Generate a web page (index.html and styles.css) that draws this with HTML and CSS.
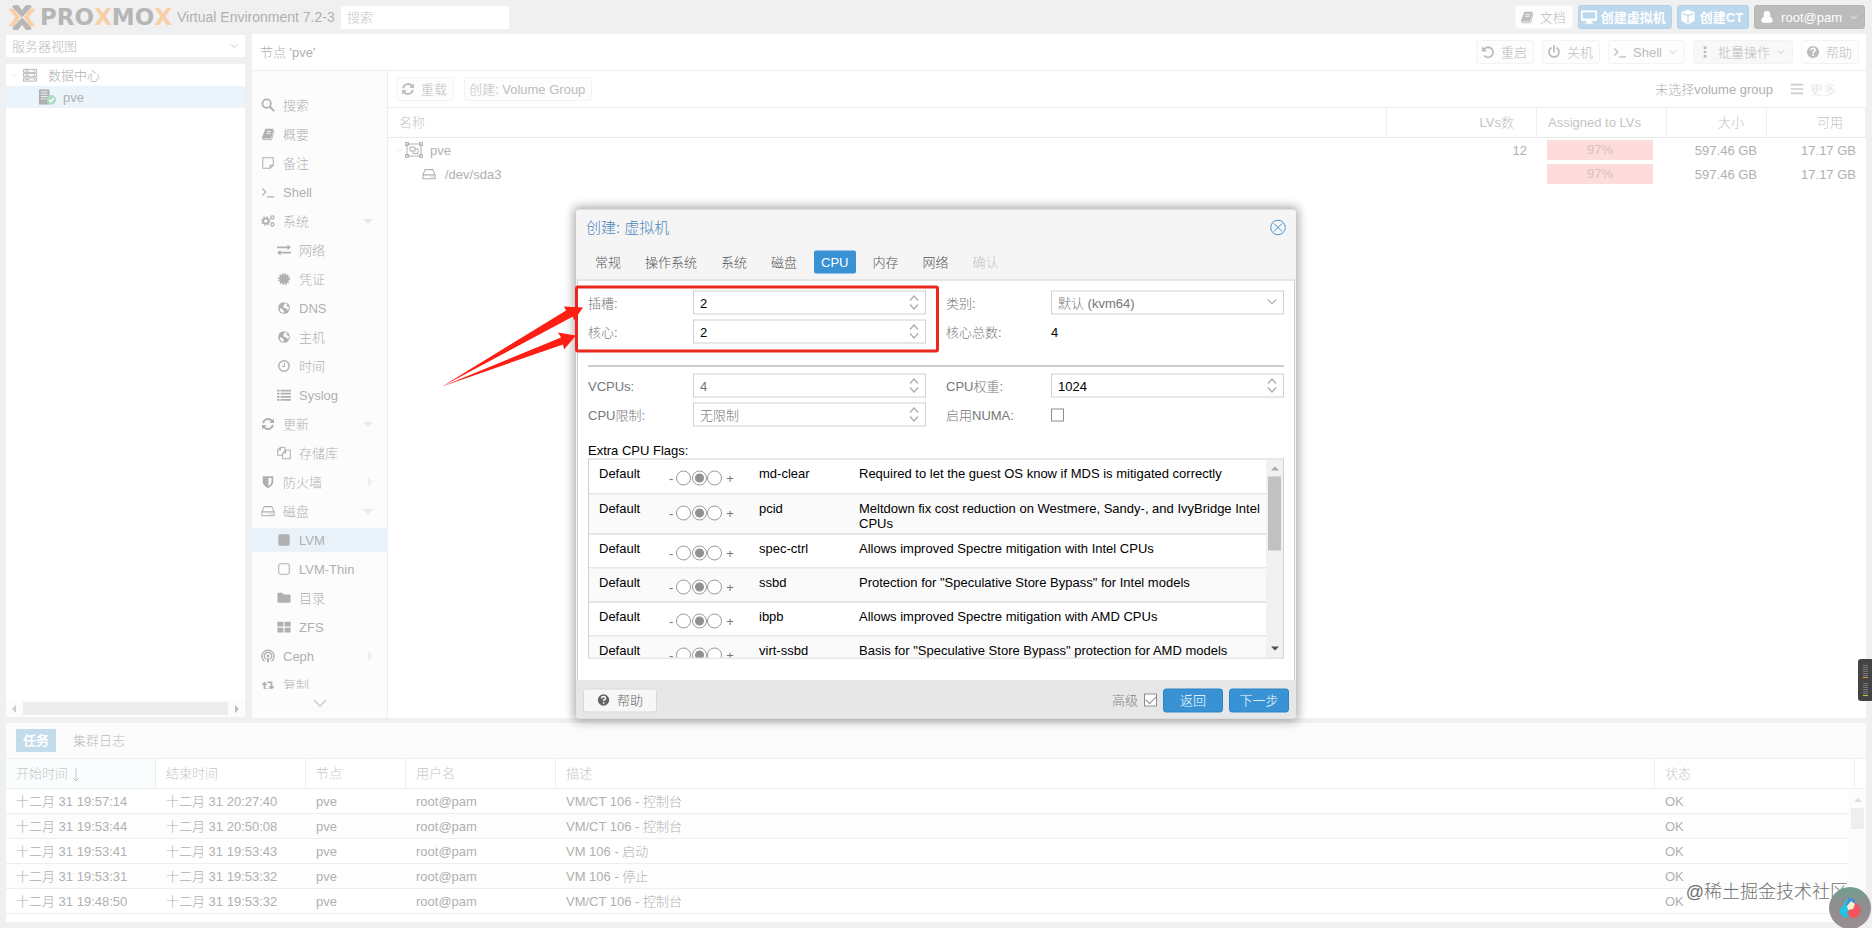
FILE: index.html
```html
<!DOCTYPE html>
<html lang="zh-CN">
<head>
<meta charset="utf-8">
<title>pve - Proxmox Virtual Environment</title>
<link rel="stylesheet" href="styles.css">
</head>
<body>
<svg class="defs" aria-hidden="true">
  <symbol id="search" viewBox="0 0 16 16"><circle cx="6.5" cy="6.5" r="4.8" fill="none" stroke="currentColor" stroke-width="2"/><path d="M10 10l5 5" stroke="currentColor" stroke-width="2.4"/></symbol>
  <symbol id="book" viewBox="0 0 16 16"><path d="M5 2h9.5l-3 11H2.500Q.8 13 1.500 11z"/><path d="M15 4l-3 10.500H3M1.500 12.500q.2 2 2 2" fill="none" stroke="currentColor"/><path d="M6.500 5h5M6 7.200h5" stroke="#fff"/></symbol>
  <symbol id="note" viewBox="0 0 16 16"><path d="M2 2h12v8.500L10.500 14H2zM10.500 14v-3.500H14" fill="none" stroke="currentColor" stroke-width="1.200"/></symbol>
  <symbol id="term" viewBox="0 0 16 16"><path d="M1.500 4l4 4-4 4M7 13.500h8" fill="none" stroke="currentColor" stroke-width="1.300"/></symbol>
  <symbol id="cogs" viewBox="0 0 16 16"><circle cx="5.500" cy="8" r="3" fill="none" stroke="currentColor" stroke-width="2"/><circle cx="5.500" cy="8" r="4.600" fill="none" stroke="currentColor" stroke-width="1.600" stroke-dasharray="1.800 1.810"/><circle cx="13" cy="4" r="1.800" fill="none" stroke="currentColor" stroke-width="1.400"/><circle cx="13" cy="12" r="1.800" fill="none" stroke="currentColor" stroke-width="1.400"/></symbol>
  <symbol id="swap" viewBox="0 0 16 16"><path d="M0 4h12V1.800L16 5l-4 3V6H0zM16 10H4V8L0 11l4 3.200V12h12z"/></symbol>
  <symbol id="cert" viewBox="0 0 16 16"><circle cx="8" cy="8" r="5.500"/><circle cx="8" cy="8" r="6" fill="none" stroke="currentColor" stroke-width="2" stroke-dasharray="1.570 1.570"/></symbol>
  <symbol id="globe" viewBox="0 0 16 16"><circle cx="8" cy="8" r="6.700"/><path d="M9 2.500l3 1-1.500 2L13.800 7l-1 4-2-2.500-2.500-.5L7 6zM3 8l3.500 1.500L8 12l-1 1.800L4 12z" fill="#fcfcfc"/></symbol>
  <symbol id="clock" viewBox="0 0 16 16"><circle cx="8" cy="8" r="6" fill="none" stroke="currentColor" stroke-width="1.700"/><path d="M8.500 4.500v4H5.500" fill="none" stroke="currentColor" stroke-width="1.200"/></symbol>
  <symbol id="list" viewBox="0 0 16 16"><path d="M0 2h3v2H0zM4 2h12v2H4zM0 5.500h3v2H0zM4 5.500h12v2H4zM0 9h3v2H0zM4 9h12v2H4zM0 12.500h3v2H0zM4 12.500h12v2H4z"/></symbol>
  <symbol id="refresh" viewBox="0 0 16 16"><path d="M2.500 7A5.600 5.600 0 0 1 12.500 4.500M13.500 9A5.600 5.600 0 0 1 3.500 11.500" fill="none" stroke="currentColor" stroke-width="2.200"/><path d="M14.800 1.500v5.300H9.500zM1.200 14.500V9.200h5.300z"/></symbol>
  <symbol id="copy" viewBox="0 0 16 16"><path d="M6 10.500H.800v-6L4 1.500h5v3M4 1.500v3H.800M6.500 8L10 4.500h5.200v10H6.500zM10 4.500V8H6.500" fill="none" stroke="currentColor" stroke-width="1.200"/></symbol>
  <symbol id="shield" viewBox="0 0 16 16"><path d="M2 1.500h12V8q0 4-6 7-6-3-6-7z"/><path d="M8.500 3.300H12V8q0 2.500-3.500 4.800z" fill="#fcfcfc"/></symbol>
  <symbol id="disk" viewBox="0 0 16 16"><path d="M1 9l2.500-6h9L15 9v4.500H1zM1 9h14M9.500 11.300h1M12 11.300h1" fill="none" stroke="currentColor" stroke-width="1.200" stroke-linejoin="round"/></symbol>
  <symbol id="sq" viewBox="0 0 16 16"><rect x="1.500" y="1.500" width="13" height="13" rx="2"/></symbol>
  <symbol id="sqo" viewBox="0 0 16 16"><rect x="2" y="2" width="12" height="12" rx="2" fill="none" stroke="currentColor" stroke-width="1.200"/></symbol>
  <symbol id="folder" viewBox="0 0 16 16"><path d="M.500 3.500q0-1.500 1.500-1.500h4l1.500 2H14q1.500 0 1.500 1.500V12q0 1.500-1.500 1.500H2Q.500 13.500.500 12z"/></symbol>
  <symbol id="grid" viewBox="0 0 16 16"><path d="M.500 2h6.800v5.500H.500zM8.700 2h6.800v5.500H8.700zM.500 8.800h6.800v5.500H.500zM8.700 8.800h6.800v5.500H8.700z"/></symbol>
  <symbol id="ceph" viewBox="0 0 16 16"><path d="M4 14A7 7 0 1 1 12 14M5.500 11.500a4.300 4.300 0 1 1 5 0" fill="none" stroke="currentColor" stroke-width="1.500"/><circle cx="8" cy="8" r="1.700"/><path d="M6.500 10.500h3L9 15H7z"/></symbol>
  <symbol id="retweet" viewBox="0 0 16 16"><path d="M4 4L.500 8H3v6h8l-1.500-2H5V8h2.500zM6.500 4H13v5.500h2.500L12 13.500 8.500 9.500H11V6H8z"/></symbol>
  <symbol id="desktop" viewBox="0 0 16 16"><path d="M1 1.500h14q1 0 1 1V11q0 1-1 1h-4.500v1.500h1.500v1.300H4v-1.300h1.500V12H1q-1 0-1-1V2.500q0-1 1-1zm.700 1.700v6.300h12.600V3.200z" fill-rule="evenodd"/></symbol>
  <symbol id="cube" viewBox="0 0 16 16"><path d="M8 .800l6.700 2.500v8.400L8 15.200l-6.700-3.500V3.300z"/><path d="M2.500 4.500L8 6.500l5.500-2M8 6.500V14" fill="none" stroke="#bbd8ec" stroke-width="1.200"/></symbol>
  <symbol id="user" viewBox="0 0 16 16"><circle cx="8" cy="5" r="3.800"/><path d="M1.500 12.500Q2 8 5 7.500q3 2 6 0 3 .5 3.500 5 0 2-2 2h-9q-2 0-2-2z"/></symbol>
  <symbol id="undo" viewBox="0 0 16 16"><path d="M3 5.500A5.800 5.800 0 1 1 3.500 12" fill="none" stroke="currentColor" stroke-width="2.100"/><path d="M1 1.500v6h6z"/></symbol>
  <symbol id="power" viewBox="0 0 16 16"><path d="M4.500 3.500a5.700 5.700 0 1 0 7 0M8 1v6.500" fill="none" stroke="currentColor" stroke-width="2" stroke-linecap="round"/></symbol>
  <symbol id="dots" viewBox="0 0 16 16"><path d="M6.500 1.500h3v3h-3zM6.500 6.500h3v3h-3zM6.500 11.500h3v3h-3z"/></symbol>
  <symbol id="help" viewBox="0 0 16 16"><circle cx="8" cy="8" r="7"/><path d="M5.600 6q.2-2.200 2.500-2.200t2.400 2q0 1.200-1.300 1.800-1 .6-1 1.700M8.200 10.700v2" fill="none" stroke="#fff" stroke-width="1.800"/></symbol>
  <symbol id="bars" viewBox="0 0 16 16"><path d="M1 3h14M1 8h14M1 13h14" stroke="currentColor" stroke-width="1.800"/></symbol>
  <symbol id="chev" viewBox="0 0 16 16"><path d="M3 5.500l5 5 5-5" fill="none" stroke="currentColor" stroke-width="1.300"/></symbol>
  <symbol id="servers" viewBox="0 0 16 16"><path d="M.500 1.500h15V5H.500zM.500 6.500h15V10H.500zM.500 11.500h15V15H.500zM2 3.300h5M2 8.300h5M2 13.300h5M12 3.300h2M12 8.300h2M12 13.300h2" fill="none" stroke="currentColor"/></symbol>
  <symbol id="node" viewBox="0 0 20 16"><path d="M1 0h11v16H1z"/><path d="M3 2.500h7M3 5h7M3 7.500h7M3 10h5" stroke="#eaf2f8"/><circle cx="14" cy="11" r="5" fill="#a9dcc0"/><path d="M11.500 11l2 2 3.200-4" fill="none" stroke="#fff" stroke-width="1.500"/></symbol>
  <symbol id="group" viewBox="0 0 18 16"><path d="M2 2h14v12H2zM5 5h5v4H5zM8 9v2.500h5V7h-3M.500.500h3v3h-3zM14.500.500h3v3h-3zM.500 12.500h3v3h-3zM14.500 12.500h3v3h-3z" fill="none" stroke="currentColor"/></symbol>
  <symbol id="spin" viewBox="0 0 10 16"><path d="M1 6l4-4.500L9 6M1 10l4 4.500L9 10" fill="none" stroke="currentColor" stroke-width="1.200"/></symbol>
  <symbol id="sort" viewBox="0 0 8 14"><path d="M4 0v13M1 10l3 3 3-3" fill="none" stroke="currentColor"/></symbol>
</svg>

<header class="top">
  <a class="logo" href="#" aria-label="Proxmox">
    <svg class="logo-mark" viewBox="0 0 28 26"><path d="M0 4h5.500l5 6.500L12 13l-1.500 2.500-5 6.500H0l7-9zM28 4h-5.500l-5 6.500L16 13l1.500 2.500 5 6.500H28l-7-9z" fill="#f8cfa8"/><path d="M4 2Q4 0 7 0h3l4 5.500L18 0h3q3 0 3 2l-10 11zM4 24q0 2 3 2h3l4-5.500L18 26h3q3 0 3-2L14 13z" fill="#b6b6b6"/></svg>
    <span class="word">PRO<b>X</b>MO<b>X</b></span>
  </a>
  <span class="version">Virtual Environment 7.2-3</span>
  <input class="search" type="text" placeholder="搜索" aria-label="搜索">
  <nav class="top-actions">
    <button class="btn plain"><svg><use href="#book"/></svg>文档</button>
    <button class="btn blue"><svg><use href="#desktop"/></svg>创建虚拟机</button>
    <button class="btn blue"><svg><use href="#cube"/></svg>创建CT</button>
    <button class="btn grey"><svg><use href="#user"/></svg>root@pam<svg class="small"><use href="#chev"/></svg></button>
  </nav>
</header>

<main class="work">
  <aside class="resources">
    <button class="view-select">服务器视图<svg class="small"><use href="#chev"/></svg></button>
    <div class="tree">
      <div class="tree-row"><svg class="tick"><use href="#chev"/></svg><svg><use href="#servers"/></svg><span>数据中心</span></div>
      <div class="tree-row child active"><svg class="wide"><use href="#node"/></svg><span>pve</span></div>
      <div class="hscroll"><i class="left"></i><i class="thumb"></i><i class="right"></i></div>
    </div>
  </aside>

  <section class="node">
    <div class="node-bar">
      <h1>节点 'pve'</h1>
      <button class="btn"><svg><use href="#undo"/></svg>重启</button>
      <button class="btn"><svg><use href="#power"/></svg>关机</button>
      <button class="btn"><svg><use href="#term"/></svg>Shell<svg class="small"><use href="#chev"/></svg></button>
      <button class="btn shaded"><svg><use href="#dots"/></svg>批量操作<svg class="small"><use href="#chev"/></svg></button>
      <button class="btn"><svg><use href="#help"/></svg>帮助</button>
    </div>
    <div class="node-body">
      <nav class="menu">
        <ul>
          <li><svg><use href="#search"/></svg>搜索</li>
          <li><svg><use href="#book"/></svg>概要</li>
          <li><svg><use href="#note"/></svg>备注</li>
          <li><svg><use href="#term"/></svg>Shell</li>
          <li class="open"><svg><use href="#cogs"/></svg>系统</li>
          <li class="sub"><svg><use href="#swap"/></svg>网络</li>
          <li class="sub"><svg><use href="#cert"/></svg>凭证</li>
          <li class="sub"><svg><use href="#globe"/></svg>DNS</li>
          <li class="sub"><svg><use href="#globe"/></svg>主机</li>
          <li class="sub"><svg><use href="#clock"/></svg>时间</li>
          <li class="sub"><svg><use href="#list"/></svg>Syslog</li>
          <li class="open"><svg><use href="#refresh"/></svg>更新</li>
          <li class="sub"><svg><use href="#copy"/></svg>存储库</li>
          <li class="closed"><svg><use href="#shield"/></svg>防火墙</li>
          <li class="open"><svg><use href="#disk"/></svg>磁盘</li>
          <li class="sub active"><svg><use href="#sq"/></svg>LVM</li>
          <li class="sub"><svg><use href="#sqo"/></svg>LVM-Thin</li>
          <li class="sub"><svg><use href="#folder"/></svg>目录</li>
          <li class="sub"><svg><use href="#grid"/></svg>ZFS</li>
          <li class="closed"><svg><use href="#ceph"/></svg>Ceph</li>
          <li><svg><use href="#retweet"/></svg>复制</li>
        </ul>
        <button class="more" aria-label="向下滚动"><svg><use href="#chev"/></svg></button>
      </nav>
      <div class="volumes">
        <div class="toolbar">
          <button class="btn"><svg><use href="#refresh"/></svg>重载</button>
          <button class="btn">创建: Volume Group</button>
          <span class="hint">未选择volume group</span>
          <button class="btn ghost"><svg><use href="#bars"/></svg><span>更多</span></button>
        </div>
        <table class="vg">
          <colgroup><col><col class="c150"><col class="c130"><col class="c100"><col class="c99"></colgroup>
          <thead><tr><th>名称</th><th class="num">LVs数</th><th>Assigned to LVs</th><th class="num">大小</th><th class="num">可用</th></tr></thead>
          <tbody>
            <tr><td><span class="cell"><svg class="tick"><use href="#chev"/></svg><svg class="wide"><use href="#group"/></svg>pve</span></td><td class="num">12</td><td><div class="usage">97%</div></td><td class="num">597.46 GB</td><td class="num">17.17 GB</td></tr>
            <tr><td><span class="cell leaf"><svg><use href="#disk"/></svg>/dev/sda3</span></td><td></td><td><div class="usage">97%</div></td><td class="num">597.46 GB</td><td class="num">17.17 GB</td></tr>
          </tbody>
        </table>
      </div>
    </div>
  </section>
</main>

<section class="log">
  <div class="log-tabs"><button class="log-tab active">任务</button><button class="log-tab">集群日志</button></div>
  <div class="log-body">
    <table class="tasks">
      <colgroup><col class="c150"><col class="c150"><col class="c100"><col class="c150"><col><col class="c200"><col class="c12"></colgroup>
      <thead><tr><th class="sorted">开始时间 <svg><use href="#sort"/></svg></th><th>结束时间</th><th>节点</th><th>用户名</th><th>描述</th><th>状态</th><th></th></tr></thead>
      <tbody>
        <tr><td>十二月 31 19:57:14</td><td>十二月 31 20:27:40</td><td>pve</td><td>root@pam</td><td>VM/CT 106 - 控制台</td><td>OK</td><td></td></tr>
        <tr><td>十二月 31 19:53:44</td><td>十二月 31 20:50:08</td><td>pve</td><td>root@pam</td><td>VM/CT 106 - 控制台</td><td>OK</td><td></td></tr>
        <tr><td>十二月 31 19:53:41</td><td>十二月 31 19:53:43</td><td>pve</td><td>root@pam</td><td>VM 106 - 启动</td><td>OK</td><td></td></tr>
        <tr><td>十二月 31 19:53:31</td><td>十二月 31 19:53:32</td><td>pve</td><td>root@pam</td><td>VM 106 - 停止</td><td>OK</td><td></td></tr>
        <tr><td>十二月 31 19:48:50</td><td>十二月 31 19:53:32</td><td>pve</td><td>root@pam</td><td>VM/CT 106 - 控制台</td><td>OK</td><td></td></tr>
      </tbody>
    </table>
    <div class="log-scroll"><i class="up"></i><i class="thumb"></i></div>
  </div>
</section>

<div class="dialog" role="dialog" aria-labelledby="dlg-title">
  <div class="dlg-head">
    <h2 id="dlg-title">创建: 虚拟机</h2>
    <button class="close" aria-label="关闭"><svg viewBox="0 0 16 16"><circle cx="8" cy="8" r="7.300"/><path d="M4 4l8 8M12 4l-8 8"/></svg></button>
  </div>
  <div class="tabs">
    <button>常规</button><button>操作系统</button><button>系统</button><button>磁盘</button><button class="active">CPU</button><button>内存</button><button>网络</button><button disabled>确认</button>
  </div>
  <div class="dlg-body">
    <div class="fields">
      <label for="sockets">插槽:</label>
      <div class="field"><input id="sockets" type="text" value="2"><svg><use href="#spin"/></svg></div>
      <label for="type">类别:</label>
      <div class="field"><select id="type"><option>默认 (kvm64)</option></select><svg class="drop"><use href="#chev"/></svg></div>
      <label for="cores">核心:</label>
      <div class="field"><input id="cores" type="text" value="2"><svg><use href="#spin"/></svg></div>
      <span class="label">核心总数:</span>
      <output for="sockets cores">4</output>
    </div>
    <hr>
    <div class="fields">
      <label for="vcpus">VCPUs:</label>
      <div class="field"><input id="vcpus" type="text" placeholder="4"><svg><use href="#spin"/></svg></div>
      <label for="weight">CPU权重:</label>
      <div class="field"><input id="weight" type="text" value="1024"><svg><use href="#spin"/></svg></div>
      <label for="limit">CPU限制:</label>
      <div class="field"><input id="limit" type="text" placeholder="无限制"><svg><use href="#spin"/></svg></div>
      <label for="numa">启用NUMA:</label>
      <input id="numa" class="check" type="checkbox">
    </div>
    <div class="flags-title">Extra CPU Flags:</div>
    <div class="flags">
      <table>
        <colgroup><col class="f70"><col class="f90"><col class="f100"><col></colgroup>
        <tbody>
          <tr><td>Default</td><td><div class="tri">-<input type="radio" name="f1" aria-label="关"><input type="radio" name="f1" aria-label="默认" checked><input type="radio" name="f1" aria-label="开">+</div></td><td>md-clear</td><td>Required to let the guest OS know if MDS is mitigated correctly</td></tr>
          <tr><td>Default</td><td><div class="tri">-<input type="radio" name="f2" aria-label="关"><input type="radio" name="f2" aria-label="默认" checked><input type="radio" name="f2" aria-label="开">+</div></td><td>pcid</td><td>Meltdown fix cost reduction on Westmere, Sandy-, and IvyBridge Intel CPUs</td></tr>
          <tr><td>Default</td><td><div class="tri">-<input type="radio" name="f3" aria-label="关"><input type="radio" name="f3" aria-label="默认" checked><input type="radio" name="f3" aria-label="开">+</div></td><td>spec-ctrl</td><td>Allows improved Spectre mitigation with Intel CPUs</td></tr>
          <tr><td>Default</td><td><div class="tri">-<input type="radio" name="f4" aria-label="关"><input type="radio" name="f4" aria-label="默认" checked><input type="radio" name="f4" aria-label="开">+</div></td><td>ssbd</td><td>Protection for "Speculative Store Bypass" for Intel models</td></tr>
          <tr><td>Default</td><td><div class="tri">-<input type="radio" name="f5" aria-label="关"><input type="radio" name="f5" aria-label="默认" checked><input type="radio" name="f5" aria-label="开">+</div></td><td>ibpb</td><td>Allows improved Spectre mitigation with AMD CPUs</td></tr>
          <tr><td>Default</td><td><div class="tri">-<input type="radio" name="f6" aria-label="关"><input type="radio" name="f6" aria-label="默认" checked><input type="radio" name="f6" aria-label="开">+</div></td><td>virt-ssbd</td><td>Basis for "Speculative Store Bypass" protection for AMD models</td></tr>
        </tbody>
      </table>
      <div class="vscroll"><i class="up"></i><i class="thumb"></i><i class="down"></i></div>
    </div>
  </div>
  <div class="dlg-foot">
    <button class="help"><svg><use href="#help"/></svg>帮助</button>
    <label for="adv">高级</label><input id="adv" class="check" type="checkbox" checked>
    <button class="primary">返回</button>
    <button class="primary">下一步</button>
  </div>
  <div class="mark"></div>
  <svg class="arrows" viewBox="0 0 160 115"><path d="M7 106L131 30l-2-4 19 1-9 13-1-4zM7 106L126 57l-3-5 18 3-12 14-1-5z" fill="#fd1f14"/></svg>
</div>

<div class="meter" aria-hidden="true"><i></i><i></i></div>
<div class="watermark">@稀土掘金技术社区</div>
<svg class="float" viewBox="0 0 42 42" aria-hidden="true"><defs><linearGradient id="ring" x2="0" y2="1"><stop stop-color="#6f9f90"/><stop offset=".4" stop-color="#8e8e8e"/><stop offset="1" stop-color="#9a8e94"/></linearGradient></defs><circle cx="21" cy="21" r="21" fill="url(#ring)"/><path d="M20 11q-4 2-5 7-5 3-4 8 2 5 8 4l2-9z" fill="#21c4e6"/><path d="M20 11q6 0 6 5l-5 5-4-3z" fill="#3a8fe0"/><path d="M21 21l5-5q7 3 5 10-2 6-8 5l-5-4z" fill="#f2555f"/><path d="M18 19l4-5 4 3-2 5-5 1z" fill="#f7efc9"/></svg>
</body>
</html>
```
FILE: styles.css
```css
* { box-sizing: border-box; }
body {
  margin: 0; height: 100vh; display: flex; flex-direction: column; overflow: hidden;
  padding-bottom: 6px; position: relative; background: #f0f0f0; color: #b0b0b0;
  font: 300 13px/17px "Liberation Sans", "Noto Sans CJK SC", sans-serif;
}
button, input, select { font: inherit; color: inherit; margin: 0; }
button { border: 0; background: none; padding: 0; white-space: nowrap; }
h1, h2 { margin: 0; font-weight: 300; }
svg { width: 14px; height: 14px; fill: currentColor; flex: none; }
.defs { position: absolute; width: 0; height: 0; }
table { border-collapse: separate; border-spacing: 0; table-layout: fixed; width: 100%; }
th { font-weight: 300; text-align: left; }

/* Header */
.top { flex: none; height: 34px; display: flex; align-items: center; padding: 0 7px 0 8px; }
.logo { display: flex; align-items: center; gap: 4px; text-decoration: none; width: 169px; }
.logo-mark { width: 28px; height: 25px; }
.word { font: bold 23px/26px "DejaVu Sans", sans-serif; color: #b6b6b6; }
.word b { color: #f8cfa8; }
.version { font-size: 14px; width: 164px; }
.search { width: 168px; height: 23px; border: 0; background: #fff; padding: 0 6px; outline: 0; }
.search::placeholder { color: #c8c8c8; }
.top-actions { margin-left: auto; display: flex; gap: 5px; }
.btn {
  height: 24px; display: flex; align-items: center; gap: 6px; padding: 0 6px 0 4px; color: #bcbcbc;
  border: 1px solid #f3f3f3; border-radius: 3px; background: #fdfdfd;
}
.btn.plain { border-color: #f8f8f8; }
.btn.blue { background: #bbd8ec; border-color: #b2d3e9; color: #fff; font-weight: bold; gap: 4px; padding: 0 5px 0 2px; }
.btn.blue svg { width: 16px; height: 16px; }
.btn.grey { background: #bcbcbc; border-color: #b6b6b6; color: #fff; font-weight: 400; gap: 7px; padding: 0 5px; }
.btn.shaded { background: #f8f8f8; }
.btn.ghost { border-color: transparent; background: none; width: 73px; margin-left: 2px; color: #ccc; }
.btn.ghost span { color: #e2e2e2; }
svg.small { width: 10px; height: 10px; }

/* Resource tree and node panel */
.work { flex: 1; min-height: 0; display: flex; gap: 7px; padding: 0 6px; }
.resources { width: 239px; display: flex; flex-direction: column; gap: 7px; padding: 1px 0; }
.view-select { height: 22px; display: flex; justify-content: space-between; align-items: center; padding: 0 6px; background: #fff; color: #bcbcbc; }
.tree { flex: 1; background: #fff; display: flex; flex-direction: column; }
.tree-row { height: 22px; display: flex; align-items: center; gap: 10px; padding-left: 4px; }
.tree-row svg { width: 16px; }
.tree-row.child { padding-left: 32px; gap: 6px; background: #eaf4fa; }
.tree-row svg.wide { width: 19px; height: 16px; }
.tree-row svg.tick, .cell svg.tick { width: 8px; height: 8px; color: #ddd; }
.tree-row svg.tick { margin-right: -6px; }
.hscroll { margin-top: auto; height: 17px; display: flex; align-items: center; gap: 7px; padding: 0 6px; background: #fcfcfc; }
.hscroll .thumb { flex: 1; height: 13px; background: #ececec; }
.left, .right { border: 4px solid transparent; }
.left { border-right-color: #ccc; border-left: 0; }
.right { border-left-color: #bbb; border-right: 0; }

.node { flex: 1; min-width: 0; background: #fff; display: flex; flex-direction: column; }
.node-bar { height: 37px; flex: none; display: flex; align-items: center; gap: 8px; padding: 0 7px 0 8px; border-bottom: 1px solid #eee; }
.node-bar h1 { font-size: 13px; margin-right: auto; }
.node-body { flex: 1; min-height: 0; display: flex; }
.menu { width: 136px; flex: none; padding: 20px 0 1px; background: #fcfcfc; border-right: 1px solid #eee; display: flex; flex-direction: column; }
.menu ul { list-style: none; margin: 0; padding: 0; flex: 1; overflow: hidden; }
.menu li { height: 24px; margin: 2px 0 5px; display: flex; align-items: center; gap: 8px; padding: 0 14px 0 9px; }
.menu li.sub { padding-left: 25px; }
.menu li.active { background: #e9f2f9; }
.open::after, .closed::after { content: ""; margin-left: auto; border: 5px solid transparent; }
.open::after { border-top-color: #e9e9e9; border-bottom: 0; }
.closed::after { border-left-color: #efefef; border-right: 0; }
.more { height: 28px; color: #d4d4d4; display: flex; justify-content: center; align-items: center; }
.more svg { width: 20px; height: 20px; }

.volumes { flex: 1; min-width: 0; }
.toolbar { height: 37px; display: flex; align-items: center; gap: 10px; padding: 0 8px; border-bottom: 1px solid #eee; }
.hint { margin-left: auto; }
.c200 { width: 200px; } .c150 { width: 150px; } .c130 { width: 130px; }
.c100 { width: 100px; } .c99 { width: 99px; } .c12 { width: 11px; }
.vg th { height: 30px; padding: 0 10px 0 11px; border-bottom: 1px solid #e8e8e8; border-right: 1px solid #eee; color: #c4c4c4; }
.vg th.num { padding-right: 22px; }
.num { text-align: right; }
.vg td { height: 24px; padding: 0 10px; }
.vg td:nth-child(3) { padding-right: 14px; }
.vg td:first-child { padding-left: 8px; }
.cell { display: flex; align-items: center; gap: 7px; }
.cell svg.tick { margin-right: -6px; }
.cell svg.wide { width: 18px; height: 16px; }
.cell.leaf { padding-left: 26px; gap: 9px; }
.usage { height: 20px; line-height: 19px; background: #ffdcdc; text-align: center; color: #d4c0c0; }

/* Task log */
.log { flex: none; height: 199px; margin: 5px 6px 0; background: #fff; display: flex; flex-direction: column; overflow: hidden; }
.log-tabs { height: 36px; flex: none; display: flex; align-items: center; gap: 10px; padding: 0 10px; background: #fcfcfc; border-bottom: 1px solid #eee; }
.log-tab { height: 23px; padding: 0 7px; color: #bcbcbc; }
.log-tab.active { background: #c2dcec; color: #fff; font-weight: bold; }
.log-body { flex: 1; min-height: 0; display: flex; align-items: flex-start; position: relative; }
.tasks th { height: 30px; padding: 0 10px; border-bottom: 1px solid #eee; border-right: 1px solid #eee; color: #c8c8c8; }
.tasks th:last-child { border-right: 0; padding: 0; }
.tasks th.sorted { background: #fafdfe; }
.tasks th svg { width: 8px; height: 14px; vertical-align: middle; }
.tasks td { height: 25px; padding: 0 10px; border-bottom: 1px solid #eee; white-space: nowrap; }
.tasks tr:nth-child(even) td { background: #fdfdfd; }
.tasks td:last-child { padding: 0; }
.log-scroll { position: absolute; right: 0; top: 31px; bottom: 0; width: 17px; padding: 8px 2px; background: #fcfcfc; display: flex; flex-direction: column; align-items: center; gap: 6px; }
.log-scroll .thumb { width: 13px; height: 21px; background: #eee; }
.up, .down { border: 4px solid transparent; }
.up { border-bottom-color: #a8a8a8; border-top: 0; }
.down { border-top-color: #505050; border-bottom: 0; }
.log-scroll .up { border-bottom-color: #ddd; }

/* Create VM dialog */
.dialog {
  position: absolute; left: 50%; top: 50%; transform: translate(-50%, -50%); width: 720px;
  background: #f5f5f5; border-radius: 3px; color: #777; box-shadow: 0 0 10px 3px rgba(0, 0, 0, .3);
}
.dlg-head { height: 36px; display: flex; align-items: center; justify-content: space-between; padding: 0 10px; color: #4a86bb; }
.dlg-head h2 { font-size: 15px; line-height: 20px; }
.close svg { width: 16px; height: 16px; display: block; fill: none; stroke: #4793cc; }
.tabs { display: flex; gap: 10px; padding: 5px 12px; height: 34px; }
.tabs button { height: 23px; padding: 0 7px; border-radius: 2px; color: #555; }
.tabs .active { background: #3892d4; color: #fff; font-weight: 400; }
.tabs button:disabled { color: #c4c4c4; }
.dlg-body { margin: 0 1px; padding: 10px 10px 22px; background: #fff; border: 1px solid #d0d0d0; }
.fields { display: grid; grid-template-columns: 105px 1fr 125px 1fr; row-gap: 5px; align-items: center; }
.fields > :nth-child(4n+3) { padding-left: 20px; }
.field { position: relative; height: 24px; }
.field input, .field select { width: 100%; height: 24px; border: 1px solid #cfcfcf; border-radius: 0; background: #fff; padding: 0 6px; outline: 0; }
.field input { color: #000; }
.field select { appearance: none; color: #777; }
.field input::placeholder { color: #777; }
.field svg { position: absolute; right: 7px; top: 4px; width: 10px; height: 16px; color: #aaa; }
.field svg.drop { width: 14px; height: 14px; right: 5px; }
output { color: #000; }
hr { border: 0; border-top: 1px solid #999; margin: 22px 0 7px; }
.check { appearance: none; width: 13px; height: 13px; border: 1px solid #8c8c8c; background: #fff; position: relative; }
.check:checked::after { content: ""; position: absolute; left: 3px; top: -1px; width: 5px; height: 9px; border: solid #888; border-width: 0 1px 1px 0; transform: rotate(45deg); }
.flags-title { color: #000; margin-top: 15px; }
.flags { height: 200px; display: flex; border: 1px solid #cfcfcf; overflow: hidden; color: #000; line-height: 15px; }
.flags table { flex: 1; align-self: flex-start; }
.flags td { height: 34px; vertical-align: top; padding: 6px 0 3px 10px; border-bottom: 1px solid #cfcfcf; }
.flags tr:first-child td { height: 35px; }
.flags tr:nth-child(even) td { background: #fafafa; }
.f70 { width: 70px; } .f90 { width: 90px; } .f100 { width: 100px; }
.tri { display: flex; align-items: center; padding: 5px 0 0; color: #777; }
.tri input { appearance: none; width: 15px; height: 15px; border: 1px solid #999; border-radius: 50%; background: #fff; }
.tri input:checked { background: radial-gradient(circle, #919191 4px, #fff 5px); }
.tri input:first-of-type { margin: 0 1px 0 3px; }
.tri input:last-of-type { margin-right: 4px; }
.vscroll { width: 17px; background: #f1f1f1; display: flex; flex-direction: column; align-items: center; padding: 7px 0; }
.vscroll .thumb { width: 13px; height: 74px; background: #c1c1c1; margin: 6px 0 auto; }
.dlg-foot { height: 37px; display: flex; align-items: center; gap: 6px; padding: 0 7px; background: #e7e7e7; border-radius: 0 0 3px 3px; color: #888; }
.help { width: 74px; height: 24px; margin-right: auto; display: flex; align-items: center; justify-content: center; gap: 7px; background: #f7f7f7; border: 1px solid #d8d8d8; border-radius: 3px; color: #666; }
.help svg { width: 13px; height: 13px; }
.primary { width: 60px; height: 24px; background: #3892d4; border: 1px solid #2c84c6; border-radius: 3px; color: #fff; }
.mark { position: absolute; left: -1px; right: 357px; top: 76px; height: 67px; border: 3px solid #ea261d; border-radius: 3px; }
.arrows { position: absolute; left: -141px; top: 71px; width: 160px; height: 115px; }

/* Floating widgets */
.meter { position: absolute; right: 0; top: 659px; width: 14px; height: 42px; padding: 6px 4px 4px 5px; background: #444; border-radius: 3px 0 0 3px; display: flex; flex-direction: column; gap: 5px; }
.meter i { height: 13px; background: repeating-linear-gradient(#777 0 1px, #444 1px 2px); border-bottom: 1px solid #e0a23c; }
.meter i + i { border-bottom-color: #c8c83c; }
.watermark { position: absolute; right: 24px; bottom: 24px; font-size: 18px; line-height: 24px; color: #707070; }
.float { position: absolute; right: 1px; bottom: -1px; width: 42px; height: 42px; }
```
